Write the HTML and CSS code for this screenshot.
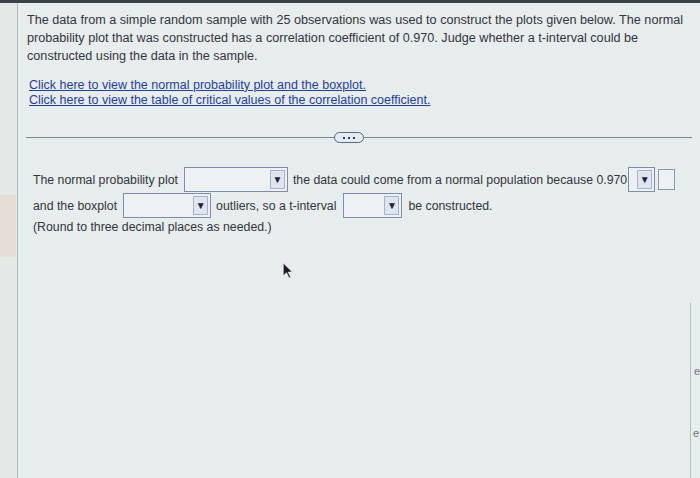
FILE: index.html
```html
<!DOCTYPE html>
<html>
<head>
<meta charset="utf-8">
<link rel="stylesheet" href="styles.css">
</head>
<body>
<div class="topbar"></div>
<div class="page">
  <div class="leftstrip"><div class="patch"></div></div>
  <div class="content">
    <p class="intro">The data from a simple random sample with 25 observations was used to construct the plots given below. The normal probability plot that was constructed has a correlation coefficient of 0.970. Judge whether a t-interval could be constructed using the data in the sample.</p>
    <div class="links">
      <a class="link" href="#">Click here to view the normal probability plot and the boxplot.</a>
      <a class="link" href="#">Click here to view the table of critical values of the correlation coefficient.</a>
    </div>
    <div class="divider"><span class="pill"><i></i><i></i><i></i></span></div>
    <div class="question">
      <div class="row r1">
        <span>The normal probability plot</span>
        <span class="dd w1"><span class="field"></span><span class="btn">&#9660;</span></span>
        <span>the data could come from a normal population because 0.970</span>
        <span class="dd w4"><span class="field"></span><span class="btn">&#9660;</span></span>
        <span class="box"></span>
      </div>
      <div class="row r2">
        <span>and the boxplot</span>
        <span class="dd w2"><span class="field"></span><span class="btn">&#9660;</span></span>
        <span>outliers, so a t-interval</span>
        <span class="dd w3"><span class="field"></span><span class="btn">&#9660;</span></span>
        <span>be constructed.</span>
      </div>
      <div class="row r3">(Round to three decimal places as needed.)</div>
    </div>
    <svg class="cursor" width="11" height="17" viewBox="0 0 10 16"><path d="M1 1 L1 13 L4 10 L6.5 15 L8 14.3 L5.6 9.5 L9.5 9.5 Z" fill="#1c1c22" stroke="#eef" stroke-width="0.6"/></svg>
  </div>
  <div class="rightstrip">
    <div class="rs-top"></div>
    <div class="rs-bottom"><span class="e1">e</span><span class="e2">e</span></div>
  </div>
</div>
</body>
</html>
```
FILE: styles.css
```css
html, body {
  margin: 0;
  padding: 0;
}
body {
  width: 700px;
  height: 478px;
  overflow: hidden;
  background: #e7ecec;
  font-family: "Liberation Sans", Arial, sans-serif;
  color: #33363c;
}
.topbar {
  height: 3px;
  background: #3b4149;
}
.page {
  display: flex;
  height: 475px;
  position: relative;
}
.leftstrip {
  width: 17px;
  flex: none;
  border-right: 1px solid #a9b6b8;
  background: #e4e9e8;
  padding-top: 192px;
}
.patch {
  height: 62px;
  width: 16px;
  background: #e6ddd6;
}
.content {
  flex: 1;
  min-width: 0;
  padding-left: 9px;
  position: relative;
}
.intro {
  margin: 8px 0 0 0;
  font-size: 12.65px;
  line-height: 18px;
  width: 662px;
}
.links {
  display: flex;
  flex-direction: column;
  margin-top: 13px;
  padding-left: 2px;
}
.link {
  font-size: 12.5px;
  line-height: 15px;
  color: #1f3f9c;
  text-decoration: underline;
  text-decoration-thickness: 1px;
  text-underline-offset: 1px;
}
.divider {
  margin-top: 29px;
  margin-left: -1px;
  height: 1px;
  background: #7c8790;
  display: flex;
  justify-content: center;
  align-items: center;
  width: 660px;
  padding-right: 6px;
}
.pill {
  display: inline-flex;
  align-items: center;
  justify-content: center;
  gap: 3px;
  width: 28px;
  height: 9px;
  border: 1px solid #526a88;
  border-radius: 6px;
  background: #e6eaf2;
  margin-left: -14px;
}
.pill i {
  display: block;
  width: 2px;
  height: 2px;
  background: #2e3d5a;
}
.question {
  margin-top: 29px;
  padding-left: 6px;
  font-size: 12.3px;
}
.row {
  display: flex;
  align-items: center;
  height: 25px;
  white-space: nowrap;
}
.r1 > span:first-child { margin-right: 6px; }
.r1 .w1 { margin-right: 5px; }
.r1 .w4 { margin-left: 1px; margin-right: 3px; }
.r2 { margin-top: 1px; }
.r2 > span:first-child { margin-right: 6px; }
.r2 .w2 { margin-right: 5px; }
.r2 .w3 { margin-left: 7px; margin-right: 6px; }
.r3 {
  height: 18px;
  margin-top: 0;
}
.dd {
  display: inline-flex;
  height: 25px;
  box-sizing: border-box;
  border: 1px solid #7f8cad;
  background: #eef1f3;
  padding: 2px;
}
.dd .field {
  flex: 1;
}
.dd .btn {
  width: 13px;
  border: 1px solid #a7b3c8;
  background: #dfe5f0;
  font-size: 10px;
  color: #1d2230;
  display: flex;
  align-items: center;
  justify-content: center;
}
.w1 { width: 104px; }
.w2 { width: 88px; }
.w3 { width: 59px; }
.w4 { width: 27px; }
.box {
  display: inline-block;
  width: 17px;
  height: 21px;
  box-sizing: border-box;
  border: 1px solid #8b97b0;
  background: #eef1f2;
}
.cursor {
  position: absolute;
  left: 264px;
  top: 259px;
}
.rightstrip {
  width: 10px;
  flex: none;
  display: flex;
  flex-direction: column;
}
.rs-top {
  height: 300px;
}
.rs-bottom {
  flex: 1;
  border-left: 1px solid #b4bfc1;
  position: relative;
  font-size: 11px;
  color: #6a7480;
}
.e1 { position: absolute; left: 3px; top: 62px; }
.e2 { position: absolute; left: 2px; top: 124px; }
```
